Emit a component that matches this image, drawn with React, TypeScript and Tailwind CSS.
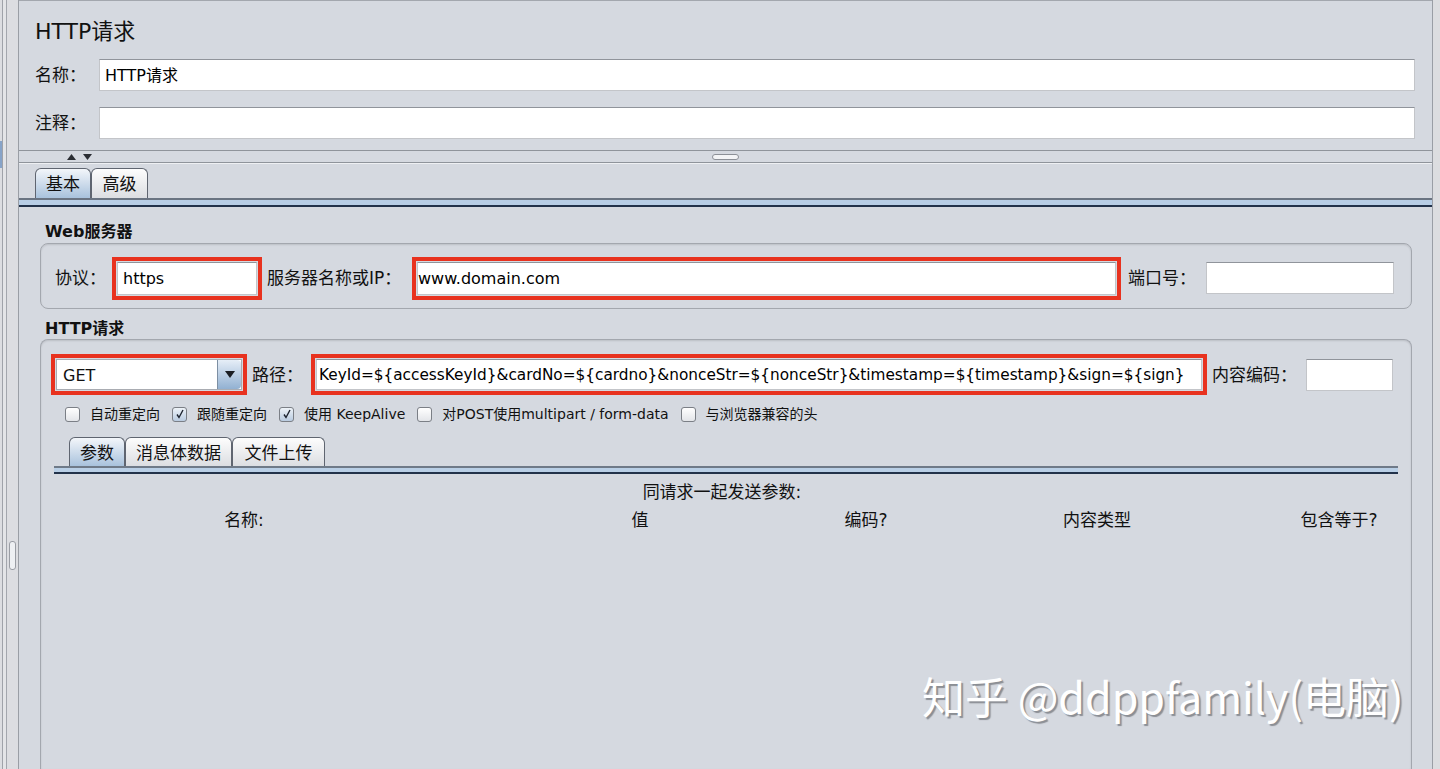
import React from "react";

const field =
  "flex items-center bg-white border border-[#c3c5c9] border-t-[#90949b] px-[5px] pt-[2px] text-[16px] text-black";
const lbl = "pt-[2px] text-[17px]";

function Red({ className, children }: { className: string; children?: React.ReactNode }) {
  return <div className={`flex border-[4px] border-[#e8321f] p-px ${className}`}>{children}</div>;
}

function Check({ on, label }: { on?: boolean; label: string }) {
  return (
    <div className="flex items-center gap-[10px]">
      <span
        className={`flex h-[15px] w-[15px] items-center justify-center rounded-[3px] border border-[#7b7f86] bg-linear-to-b ${
          on ? "from-[#eef3f8] to-[#b9cbe0]" : "from-white to-[#e3e5e9]"
        }`}
      >
        {on && (
          <svg width="10" height="10" viewBox="0 0 10 10">
            <path d="M2 5.5 L4 8.5 L8 1" fill="none" stroke="#1d2430" strokeWidth="1.4" />
          </svg>
        )}
      </span>
      <span className="text-[14px] leading-[20px]">{label}</span>
    </div>
  );
}

function Tab({ on, className, children }: { on?: boolean; className: string; children: React.ReactNode }) {
  return (
    <div
      className={`flex items-center justify-center rounded-t-[6px] border border-b-0 border-[#5f6570] bg-linear-to-b pt-[3px] text-[17px] ${
        on ? "from-[#f3f6fa] to-[#a9c2dc]" : "from-[#fdfdfd] to-[#dcdee2]"
      } ${className}`}
    >
      {children}
    </div>
  );
}

function Tri({ up }: { up?: boolean }) {
  return (
    <svg width="9" height="6" viewBox="0 0 9 6">
      <path d={up ? "M0 6 L4.5 0 L9 6 Z" : "M0 0 L9 0 L4.5 6 Z"} fill="#2a2d33" />
    </svg>
  );
}

export default function App() {
  return (
    <div className="relative flex h-[769px] w-[1440px] overflow-hidden bg-[#d5d9e0] text-[#111] [font-family:'DejaVu_Sans','Noto_Sans_CJK_SC',sans-serif]">
      {/* split pane edge */}
      <div className="flex h-full w-[19px] shrink-0">
        <div className="flex w-[2px] flex-col bg-[#dcdde1]">
          <div className="mt-[141px] h-[27px] bg-[#87a3c8]" />
        </div>
        <div className="w-px bg-[#9fa2a9]" />
        <div className="w-[3px] bg-[#e3e4e7]" />
        <div className="w-px bg-[#a3a6ad]" />
        <div className="flex w-[11px] flex-col items-center bg-[#dcdde1]">
          <div className="mt-[541px] h-[29px] w-[7px] rounded-[3px] border border-[#9a9da4] bg-[#eef0f3]" />
        </div>
        <div className="w-px bg-[#9a9ea5]" />
      </div>

      <div className="flex min-w-0 flex-1 flex-col border-t border-[#a3a7ae]">
        <div className="pl-[16px] pr-[17px] pt-[16px]">
          <div className="h-[30px] text-[22px] leading-[30px]">HTTP请求</div>
          <div className="mt-[12px] flex h-[32px] items-center">
            <span className={`w-[64px] ${lbl}`}>名称：</span>
            <div className={`${field} h-[32px] flex-1`}>HTTP请求</div>
          </div>
          <div className="mt-[16px] flex h-[32px] items-center">
            <span className={`w-[64px] ${lbl}`}>注释：</span>
            <div className={`${field} h-[32px] flex-1`} />
          </div>
        </div>

        <div className="mt-[11px] grid h-[13px] grid-cols-[1fr_auto_1fr] items-center border-y border-[#8f949b] shadow-[0_1px_0_#eef0f3]">
          <div className="flex items-center gap-[7px] pl-[48px]">
            <Tri up />
            <Tri />
          </div>
          <div className="h-[6px] w-[27px] rounded-full border border-[#8c9097] bg-[#f3f4f6]" />
          <div />
        </div>

        <div className="flex pl-[16px] pt-[5px]">
          <Tab on className="h-[30px] w-[56px]">
            基本
          </Tab>
          <Tab className="h-[30px] w-[57px]">高级</Tab>
        </div>
        <div className="h-[2px] bg-[#6a7482]" />
        <div className="h-[5px] bg-[#b8cee6]" />
        <div className="h-[2px] bg-[#22324a]" />

        <div className="flex flex-1 flex-col pl-[21px] pr-[20px]">
          <div className="ml-[5px] mt-[15px] text-[16px] font-bold leading-[20px]">Web服务器</div>
          <div className="mt-[1px] flex h-[66px] items-center rounded-[8px] border border-[#a3a7ae] pl-[14px] pt-[4px] shadow-[inset_0_1px_2px_rgba(0,0,0,0.12)]">
            <span className={`w-[57px] ${lbl}`}>协议：</span>
            <Red className="h-[43px] w-[150px]">
              <div className={`${field} h-full flex-1`}>https</div>
            </Red>
            <span className={`ml-[5px] w-[145px] ${lbl}`}>服务器名称或IP：</span>
            <Red className="h-[43px] w-[709px]">
              <div className={`${field} h-full flex-1 !px-0`}>www.domain.com</div>
            </Red>
            <span className={`ml-[7px] w-[78px] ${lbl}`}>端口号：</span>
            <div className={`${field} h-[32px] w-[188px]`} />
          </div>

          <div className="ml-[5px] mt-[10px] text-[16px] font-bold leading-[20px]">HTTP请求</div>
          <div className="flex flex-1 flex-col rounded-t-[8px] border border-b-0 border-[#a3a7ae] pt-[14px] shadow-[inset_0_1px_2px_rgba(0,0,0,0.12)]">
            <div className="flex h-[41px] items-center pl-[10px]">
              <Red className="h-[41px] w-[196px]">
                <div className="flex h-full flex-1 border border-[#a9acb2] bg-white">
                  <span className="flex flex-1 items-center pl-[6px] pt-[2px] text-[16px]">GET</span>
                  <span className="flex w-[24px] items-center justify-center rounded-r-[4px] border-l border-[#7d8fa3] bg-linear-to-b from-[#e6eef7] to-[#92b1d2]">
                    <svg width="10" height="7" viewBox="0 0 10 7">
                      <path d="M0 0 L10 0 L5 7 Z" fill="#1b1e24" />
                    </svg>
                  </span>
                </div>
              </Red>
              <span className={`ml-[5px] w-[59px] ${lbl}`}>路径：</span>
              <Red className="h-[41px] w-[896px]">
                <div className={`${field} h-full flex-1 overflow-hidden whitespace-nowrap !px-[2px] !text-[15.3px]`}>
                  {"KeyId=${accessKeyId}&cardNo=${cardno}&nonceStr=${nonceStr}&timestamp=${timestamp}&sign=${sign}"}
                </div>
              </Red>
              <span className={`ml-[5px] w-[94px] ${lbl}`}>内容编码：</span>
              <div className={`${field} h-[32px] w-[87px]`} />
            </div>

            <div className="mt-[9px] flex h-[20px] items-center gap-[12px] pl-[24px]">
              <Check label="自动重定向" />
              <Check on label="跟随重定向" />
              <Check on label="使用 KeepAlive" />
              <Check label="对POST使用multipart / form-data" />
              <Check label="与浏览器兼容的头" />
            </div>

            <div className="mx-[13px] mt-[13px] flex flex-col">
              <div className="flex h-[29px] pl-[15px]">
                <Tab on className="h-[29px] w-[56px]">
                  参数
                </Tab>
                <Tab className="h-[29px] w-[107px]">消息体数据</Tab>
                <Tab className="h-[29px] w-[93px]">文件上传</Tab>
              </div>
              <div className="h-[2px] bg-[#6f7a88]" />
              <div className="h-[4px] bg-[#b9cfe6]" />
              <div className="h-[2px] bg-[#22324a]" />

              <div className="mt-[8px] pr-[8px] text-center text-[17px] leading-[20px]">同请求一起发送参数:</div>
              <div className="mt-[8px] flex text-[17px] leading-[20px]">
                <span className="ml-[131px] w-[120px] text-center">名称:</span>
                <span className="ml-[278px] w-[120px] text-center">值</span>
                <span className="ml-[108px] w-[120px] text-center">编码?</span>
                <span className="ml-[113px] w-[120px] text-center">内容类型</span>
                <span className="ml-[124px] w-[120px] text-center">包含等于?</span>
              </div>
            </div>
          </div>
        </div>
      </div>

      <div className="w-px bg-[#9a9ea5]" />
      <div className="w-[7px] bg-[#dcdde0]" />

      <div className="absolute left-[922px] top-[674px] text-[43px] leading-none text-white [font-family:'Noto_Sans_CJK_SC',sans-serif] [text-shadow:2px_2px_1px_#8b8e94]">
        知乎 @ddppfamily(电脑)
      </div>
    </div>
  );
}
